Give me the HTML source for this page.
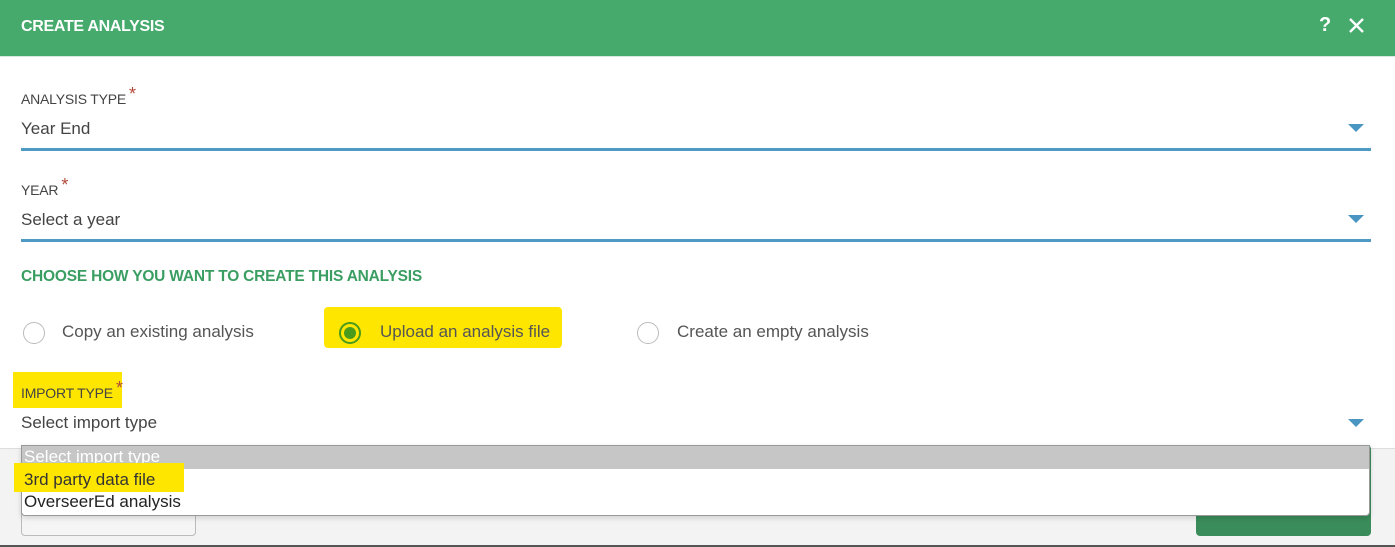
<!DOCTYPE html>
<html><head><style>
*{margin:0;padding:0;box-sizing:border-box}
body{width:1395px;height:547px;overflow:hidden;background:#fff;font-family:"Liberation Sans",sans-serif;position:relative;color:#444}
.hdr{position:absolute;left:0;top:0;width:1395px;height:57px;background:#45aa6c;border-bottom:1px solid #d8e8de}
.hdr .t{position:absolute;left:21px;top:18px;color:#fff;font-weight:bold;font-size:16px;letter-spacing:-0.3px}
.lbl{position:absolute;left:21px;font-size:14px;color:#444;letter-spacing:-0.2px}
.lbl b{color:#b24a3a;font-weight:normal;font-size:18px;position:relative;top:-4px;margin-left:3px}
.val{position:absolute;left:21px;font-size:17px;color:#444}
.line{position:absolute;left:21px;width:1350px;height:3px;background:#4f9ac4}
.arr{position:absolute;left:1348px;width:0;height:0;border-left:8px solid transparent;border-right:8px solid transparent;border-top:8px solid #4a95c2}
.hl{position:absolute;background:#ffe600}
.radio{position:absolute;width:22px;height:22px;border:1.5px solid #bbb;border-radius:50%;background:#fff}
.rt{position:absolute;font-size:17px;color:#555}
</style></head><body>
<div class="hdr"><div class="t">CREATE ANALYSIS</div>
<div style="position:absolute;left:1319px;top:14px;color:#fff;font-weight:bold;font-size:20px">?</div>
<svg style="position:absolute;left:1348px;top:17px" width="17" height="17"><path d="M2 2L15 15M15 2L2 15" stroke="#fff" stroke-width="2.4"/></svg>
</div>

<div class="lbl" style="top:88px">ANALYSIS TYPE<b>*</b></div>
<div class="val" style="top:119px">Year End</div>
<div class="arr" style="top:124px"></div>
<div class="line" style="top:148px"></div>

<div class="lbl" style="top:179px">YEAR<b>*</b></div>
<div class="val" style="top:210px">Select a year</div>
<div class="arr" style="top:215px"></div>
<div class="line" style="top:239px"></div>

<div style="position:absolute;left:21px;top:268px;font-size:15.5px;font-weight:bold;color:#3a9e62;letter-spacing:-0.2px">CHOOSE HOW YOU WANT TO CREATE THIS ANALYSIS</div>

<div class="radio" style="left:23px;top:322px"></div>
<div class="rt" style="left:62px;top:322px">Copy an existing analysis</div>
<div class="hl" style="left:324px;top:307px;width:238px;height:41px;border-radius:4px"></div>
<div class="radio" style="left:339px;top:322px;border:2.5px solid #4a9a1c;background:#ffe600"><div style="position:absolute;left:3px;top:3px;width:12px;height:12px;border-radius:50%;background:#4a9a1c"></div></div>
<div class="rt" style="left:380px;top:322px">Upload an analysis file</div>
<div class="radio" style="left:637px;top:322px"></div>
<div class="rt" style="left:677px;top:322px">Create an empty analysis</div>

<div class="hl" style="left:13px;top:372px;width:109px;height:36px"></div>
<div class="lbl" style="top:382px">IMPORT TYPE<b>*</b></div>
<div class="val" style="top:413px">Select import type</div>
<div class="arr" style="top:419px"></div>

<div style="position:absolute;left:0;top:448px;width:1395px;height:99px;background:#f3f3f3;border-top:1px solid #ddd;border-bottom:2px solid #555"></div>
<div style="position:absolute;left:21px;top:470px;width:175px;height:66px;border:1px solid #bbb;border-radius:4px;background:#f5f5f5"></div>
<div style="position:absolute;left:1196px;top:445px;width:175px;height:91px;background:#3a8d5a;border-radius:4px"></div>

<div style="position:absolute;left:21px;top:445px;width:1349px;height:71px;background:#fff;border:1px solid #999;border-radius:0 0 4px 4px;font-size:17px;color:#222;line-height:22px;box-shadow:0 2px 6px rgba(0,0,0,.15)">
<div style="background:#c6c6c6;color:#fff;padding-left:2px;height:23px">Select import type</div>
<div style="padding-left:2px;position:relative"><span style="position:absolute;left:-8px;top:-6px;width:170px;height:29px;background:#ffe600"></span><span style="position:relative;color:#333">3rd party data file</span></div>
<div style="padding-left:2px">OverseerEd analysis</div>
</div>
</body></html>
